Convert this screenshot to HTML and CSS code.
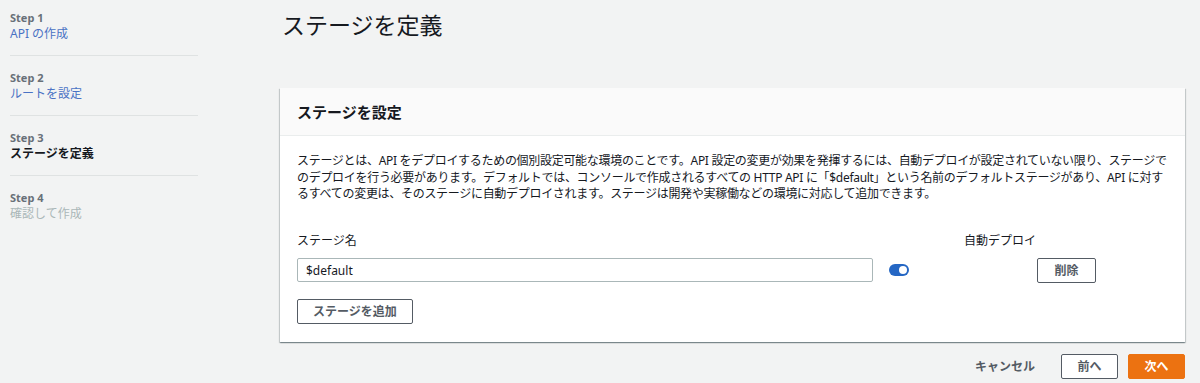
FILE: index.html
```html
<!DOCTYPE html>
<html lang="ja">
<head>
<meta charset="utf-8">
<title>ステージを定義</title>
<link rel="stylesheet" href="styles.css">
</head>
<body>
<div class="layout">
  <nav class="steps">
    <ol class="step-list">
      <li class="step">
        <div class="step-num">Step 1</div>
        <a class="step-link" href="#">API の作成</a>
      </li>
      <li class="step">
        <div class="step-num">Step 2</div>
        <a class="step-link" href="#">ルートを設定</a>
      </li>
      <li class="step">
        <div class="step-num">Step 3</div>
        <div class="step-current">ステージを定義</div>
      </li>
      <li class="step">
        <div class="step-num">Step 4</div>
        <div class="step-disabled">確認して作成</div>
      </li>
    </ol>
  </nav>
  <main class="main">
    <h1 class="page-title">ステージを定義</h1>
    <section class="panel">
      <div class="panel-header">
        <h2 class="panel-title">ステージを設定</h2>
      </div>
      <div class="panel-body">
        <p class="desc">ステージとは、API をデプロイするための個別設定可能な環境のことです。API 設定の変更が効果を発揮するには、自動デプロイが設定されていない限り、ステージで<br>のデプロイを行う必要があります。デフォルトでは、コンソールで作成されるすべての HTTP API に「$default」という名前のデフォルトステージがあり、API に対す<br>るすべての変更は、そのステージに自動デプロイされます。ステージは開発や実稼働などの環境に対応して追加できます。</p>
        <div class="stage-grid">
          <div class="col-label">ステージ名</div>
          <div></div>
          <div class="col-label auto-label">自動デプロイ</div>
          <input class="text-input" type="text" value="$default">
          <div class="toggle-cell"><span class="toggle"><span class="knob"></span></span></div>
          <div class="del-cell"><button class="btn">削除</button></div>
        </div>
        <button class="btn btn-add">ステージを追加</button>
      </div>
    </section>
    <div class="footer">
      <button class="btn-link">キャンセル</button>
      <button class="btn btn-foot">前へ</button>
      <button class="btn btn-primary">次へ</button>
    </div>
  </main>
</div>
</body>
</html>
```

FILE: styles.css
```css
* { box-sizing: border-box; }
html, body {
  margin: 0;
  padding: 0;
  background: #f2f3f3;
  font-family: "Noto Sans", "Noto Sans CJK JP", sans-serif;
  color: #16191f;
}
.layout {
  display: flex;
  width: 1200px;
  height: 383px;
}
.steps {
  width: 280px;
  flex: none;
  padding-left: 10px;
}
.step-list {
  list-style: none;
  margin: 0;
  padding: 0;
  width: 188px;
}
.step {
  padding: 15px 0 13px;
  border-bottom: 1px solid #dfe2e2;
}
.step:first-child { padding-top: 11px; }
.step:last-child { border-bottom: none; }
.step-num {
  font-size: 11px;
  line-height: 14px;
  font-weight: 700;
  color: #687078;
  margin-bottom: 1px;
}
.step-link, .step-current, .step-disabled {
  display: block;
  font-size: 12px;
  line-height: 16px;
  text-decoration: none;
}
.step-link { color: #4a72c4; }
.step-current { color: #16191f; font-weight: 700; }
.step-disabled { color: #aab7b8; }

.main {
  flex: 1;
  min-width: 0;
  padding: 10px 15px 0 0;
  display: flex;
  flex-direction: column;
}
.page-title {
  margin: 0 0 48px 2px;
  font-size: 23px;
  line-height: 30px;
  font-weight: 400;
  color: #16191f;
}
.panel {
  background: #fff;
  box-shadow: 0 1px 1px 0 rgba(0,28,36,.3), 1px 1px 1px 0 rgba(0,28,36,.15), -1px 1px 1px 0 rgba(0,28,36,.15);
}
.panel-header {
  height: 48px;
  display: flex;
  align-items: center;
  padding: 0 17px;
  background: #fafafa;
  border-bottom: 1px solid #eaeded;
}
.panel-title {
  margin: 1px 0 0;
  font-size: 15px;
  font-weight: 700;
  line-height: 20px;
}
.panel-body {
  padding: 17px 17px 18px;
}
.desc {
  margin: 0;
  font-size: 12px;
  line-height: 16.5px;
  letter-spacing: -0.3px;
  white-space: nowrap;
}
.stage-grid {
  margin-top: 30px;
  display: grid;
  grid-template-columns: 576px 59px 1fr;
  column-gap: 16px;
  row-gap: 9px;
  align-items: center;
}
.col-label {
  font-size: 12px;
  line-height: 16px;
}
.text-input {
  height: 24px;
  border: 1px solid #aab7b8;
  border-radius: 2px;
  padding: 0 8px;
  font-family: inherit;
  font-size: 12px;
  color: #16191f;
  outline: none;
}
.toggle-cell { display: flex; align-items: center; }
.toggle {
  position: relative;
  display: inline-block;
  width: 20px;
  height: 12px;
  border-radius: 6px;
  background: #2567c4;
}
.knob {
  position: absolute;
  right: 2px;
  top: 2px;
  width: 8px;
  height: 8px;
  border-radius: 50%;
  background: #fff;
}
.del-cell { padding-left: 73px; }
.btn {
  height: 25px;
  padding: 0 16px;
  background: #fff;
  border: 1px solid #545b64;
  border-radius: 2px;
  font-family: inherit;
  font-size: 12px;
  font-weight: 700;
  color: #545b64;
  cursor: pointer;
}
.del-cell .btn { width: 59px; padding: 0; }
.btn-add {
  margin-top: 16px;
  width: 116px;
  padding: 0;
}
.footer {
  margin-top: 12px;
  display: flex;
  justify-content: flex-end;
  align-items: center;
  gap: 10px;
}
.btn-link {
  background: none;
  border: none;
  padding: 0 16px 0 0;
  font-family: inherit;
  font-size: 12px;
  font-weight: 700;
  color: #545b64;
  height: 24px;
}
.btn-foot { width: 57px; padding: 0; height: 25px; }
.btn-primary {
  width: 57px;
  padding: 0;
  height: 25px;
  background: #ec7211;
  border-color: #ec7211;
  color: #fff;
}
```
